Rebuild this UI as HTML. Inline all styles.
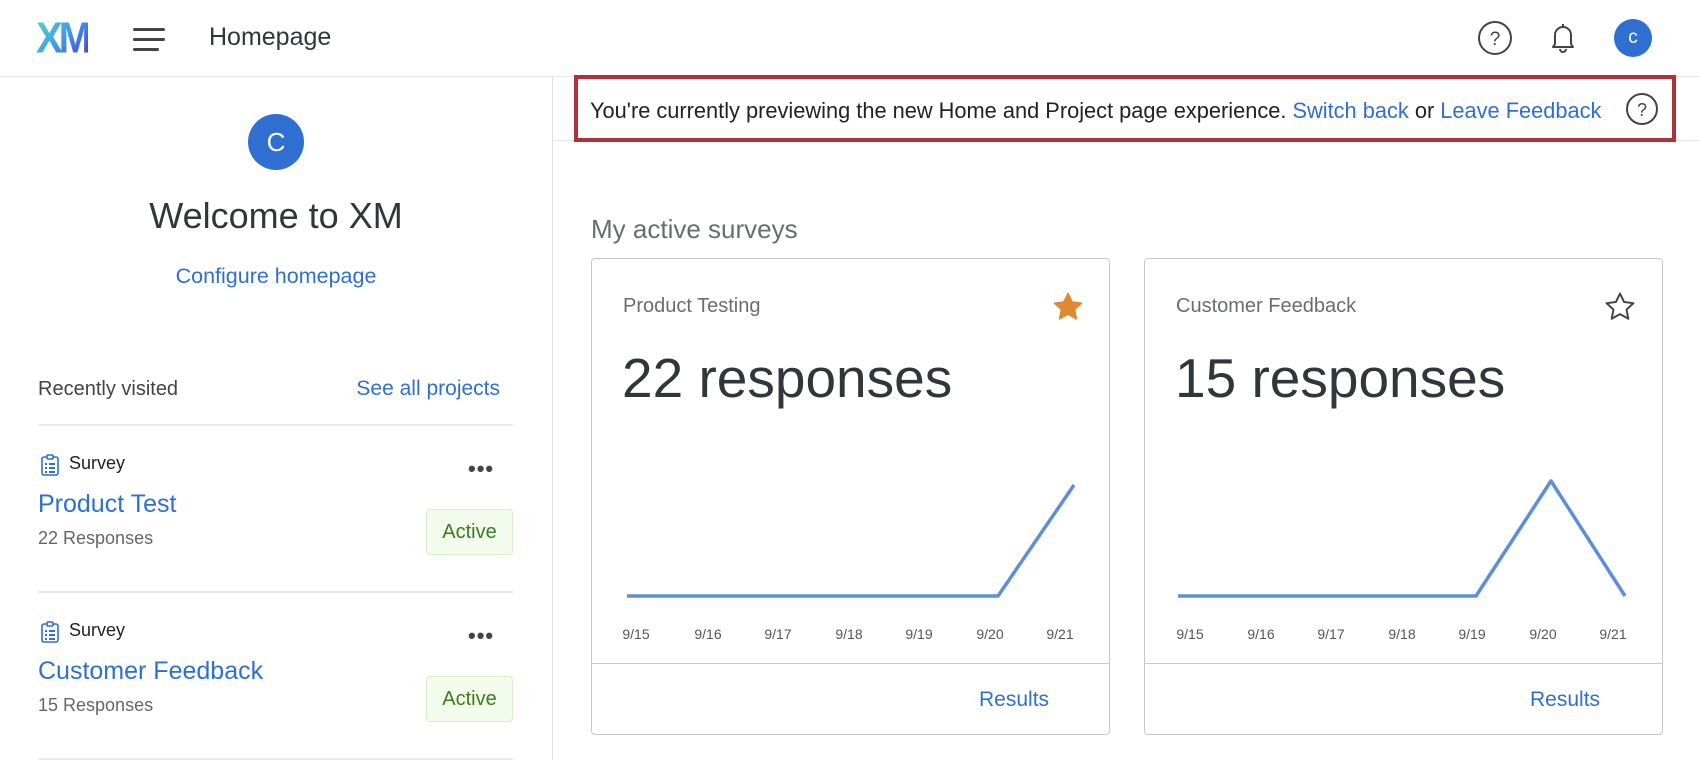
<!DOCTYPE html>
<html><head><meta charset="utf-8"><style>
*{margin:0;padding:0;box-sizing:border-box}
body{width:1700px;height:760px;overflow:hidden;background:#fff;font-family:"Liberation Sans",sans-serif;color:#32363a;position:relative}
.a{position:absolute;white-space:nowrap}
.blue{color:#2f6fd1}
.card{position:absolute;top:258px;width:519px;height:477px;border:1px solid #c6c8cc;border-radius:4px}
.lbl{position:absolute;top:626px;font-size:14px;color:#555;transform:translateX(-50%)}
.badge{position:absolute;left:426px;width:87px;height:46px;background:#f3fbec;border:1px solid #d8efc8;border-radius:4px;color:#3a7d1e;font-size:20px;text-align:center;line-height:44px}
</style></head><body>
<!-- header -->
<div class="a" style="left:36px;top:16px;font-size:40px;font-weight:bold;letter-spacing:-4px;transform:scaleY(1.1);background:linear-gradient(135deg,#5fd6b9,#3f9ee8 50%,#4a2de0);-webkit-background-clip:text;color:transparent;">XM</div>
<div class="a" style="left:133px;top:28px;width:32px;height:3px;background:#444;border-radius:2px"></div>
<div class="a" style="left:133px;top:38px;width:32px;height:3px;background:#444;border-radius:2px"></div>
<div class="a" style="left:133px;top:48px;width:26px;height:3px;background:#444;border-radius:2px"></div>
<div class="a" style="left:209px;top:23px;font-size:25px;color:#32363a">Homepage</div>
<svg class="a" style="left:1477px;top:20px" width="36" height="36" viewBox="0 0 36 36"><circle cx="18" cy="18" r="16" fill="none" stroke="#444" stroke-width="2"/><text x="18" y="25" font-size="19" text-anchor="middle" fill="#444" font-family="Liberation Sans">?</text></svg>
<svg class="a" style="left:1546px;top:20px" width="34" height="36" viewBox="0 0 34 36"><path d="M7 27 L9 24 V15 A8 8 0 0 1 25 15 V24 L27 27 Z" fill="none" stroke="#444" stroke-width="2" stroke-linejoin="round"/><path d="M14 29 A3 3 0 0 0 20 29" fill="none" stroke="#444" stroke-width="2"/><line x1="17" y1="4" x2="17" y2="7" stroke="#444" stroke-width="2"/></svg>
<div class="a" style="left:1614px;top:19px;width:38px;height:38px;border-radius:50%;background:#2f6fd1;color:#fff;font-size:19px;text-align:center;line-height:38px">c</div>
<div class="a" style="left:0;top:76px;width:1700px;height:1px;background:#e2e2e2"></div>
<!-- sidebar -->
<div class="a" style="left:552px;top:76px;width:1px;height:684px;background:#e2e2e2"></div>
<div class="a" style="left:248px;top:114px;width:56px;height:56px;border-radius:50%;background:#2f6fd1;color:#fff;font-size:26px;text-align:center;line-height:56px">C</div>
<div class="a" style="left:0;width:552px;top:195px;text-align:center;font-size:36px;color:#32363a">Welcome to XM</div>
<div class="a blue" style="left:0;width:552px;top:264px;text-align:center;font-size:21.5px">Configure homepage</div>
<div class="a" style="left:38px;top:378px;font-size:20px;color:#444">Recently visited</div>
<div class="a blue" style="right:1200px;top:377px;font-size:21px">See all projects</div>
<div class="a" style="left:38px;top:424px;width:475px;height:2px;background:#eaeaea"></div>
<!-- item 1 -->
<svg class="a" style="left:40px;top:453px" width="20" height="24" viewBox="0 0 20 24"><rect x="2" y="4" width="16" height="18" rx="2" fill="none" stroke="#2f6fd1" stroke-width="1.6"/><rect x="7" y="2" width="6" height="4" rx="1" fill="#fff" stroke="#2f6fd1" stroke-width="1.6"/><g fill="#2f6fd1"><rect x="5" y="10" width="2" height="2"/><rect x="9" y="10" width="6" height="2"/><rect x="5" y="14" width="2" height="2"/><rect x="9" y="14" width="6" height="2"/><rect x="5" y="18" width="2" height="2"/><rect x="9" y="18" width="6" height="2"/></g></svg>
<div class="a" style="left:69px;top:453px;font-size:18px;color:#222">Survey</div>
<div class="a" style="left:468px;top:456px;font-size:22px;color:#444;letter-spacing:1px;font-weight:bold">•••</div>
<div class="a blue" style="left:38px;top:490px;font-size:25px">Product Test</div>
<div class="a" style="left:38px;top:528px;font-size:18px;color:#666">22 Responses</div>
<div class="badge" style="top:509px">Active</div>
<div class="a" style="left:38px;top:591px;width:475px;height:2px;background:#eaeaea"></div>
<!-- item 2 -->
<svg class="a" style="left:40px;top:620px" width="20" height="24" viewBox="0 0 20 24"><rect x="2" y="4" width="16" height="18" rx="2" fill="none" stroke="#2f6fd1" stroke-width="1.6"/><rect x="7" y="2" width="6" height="4" rx="1" fill="#fff" stroke="#2f6fd1" stroke-width="1.6"/><g fill="#2f6fd1"><rect x="5" y="10" width="2" height="2"/><rect x="9" y="10" width="6" height="2"/><rect x="5" y="14" width="2" height="2"/><rect x="9" y="14" width="6" height="2"/><rect x="5" y="18" width="2" height="2"/><rect x="9" y="18" width="6" height="2"/></g></svg>
<div class="a" style="left:69px;top:620px;font-size:18px;color:#222">Survey</div>
<div class="a" style="left:468px;top:623px;font-size:22px;color:#444;letter-spacing:1px;font-weight:bold">•••</div>
<div class="a blue" style="left:38px;top:657px;font-size:25px">Customer Feedback</div>
<div class="a" style="left:38px;top:695px;font-size:18px;color:#666">15 Responses</div>
<div class="badge" style="top:676px">Active</div>
<div class="a" style="left:38px;top:758px;width:475px;height:2px;background:#eaeaea"></div>
<!-- banner -->
<div class="a" style="left:553px;top:140px;width:1147px;height:1px;background:#e2e2e2"></div>
<div class="a" style="left:574px;top:75px;width:1102px;height:67px;border:4px solid #b1303a;background:#fff"></div>
<div class="a" style="left:590px;top:98px;font-size:21.8px;color:#222">You're currently previewing the new Home and Project page experience. <span class="blue">Switch back</span> or <span class="blue">Leave Feedback</span></div>
<svg class="a" style="left:1625px;top:92px" width="34" height="34" viewBox="0 0 34 34"><circle cx="17" cy="17" r="15" fill="none" stroke="#444" stroke-width="2"/><text x="17" y="24" font-size="18" text-anchor="middle" fill="#444" font-family="Liberation Sans">?</text></svg>
<div class="a" style="left:591px;top:214px;font-size:26px;color:#6a6d70">My active surveys</div>
<!-- cards -->
<div class="card" style="left:591px"></div>
<div class="card" style="left:1144px"></div>
<div class="a" style="left:623px;top:295px;font-size:20px;color:#6a6d70">Product Testing</div>
<div class="a" style="left:1176px;top:295px;font-size:20px;color:#6a6d70">Customer Feedback</div>
<svg class="a" style="left:1051px;top:290px" width="34" height="34" viewBox="0 0 24 24"><path d="M12 2.5l2.9 6 6.6.8-4.9 4.5 1.3 6.5L12 17l-5.9 3.3 1.3-6.5L2.5 9.3l6.6-.8z" fill="#dd8a33" stroke="#dd8a33" stroke-width="1.2" stroke-linejoin="round"/></svg>
<svg class="a" style="left:1603px;top:290px" width="34" height="34" viewBox="0 0 24 24"><path d="M12 2.5l2.9 6 6.6.8-4.9 4.5 1.3 6.5L12 17l-5.9 3.3 1.3-6.5L2.5 9.3l6.6-.8z" fill="none" stroke="#444" stroke-width="1.4" stroke-linejoin="round"/></svg>
<div class="a" style="left:622px;top:346px;font-size:55px;color:#32363a">22 responses</div>
<div class="a" style="left:1175px;top:346px;font-size:55px;color:#32363a">15 responses</div>
<svg class="a" style="left:0;top:0" width="1700" height="760"><polyline points="627,596 998,596 1074,485" fill="none" stroke="#5b8fd8" stroke-width="3.5" stroke-linejoin="round"/><polyline points="1178,596 1476,596 1551,481 1625,596" fill="none" stroke="#5b8fd8" stroke-width="3.5" stroke-linejoin="round"/></svg>
<div class="lbl" style="left:636px">9/15</div><div class="lbl" style="left:708px">9/16</div><div class="lbl" style="left:778px">9/17</div><div class="lbl" style="left:849px">9/18</div><div class="lbl" style="left:919px">9/19</div><div class="lbl" style="left:990px">9/20</div><div class="lbl" style="left:1060px">9/21</div>
<div class="lbl" style="left:1190px">9/15</div><div class="lbl" style="left:1261px">9/16</div><div class="lbl" style="left:1331px">9/17</div><div class="lbl" style="left:1402px">9/18</div><div class="lbl" style="left:1472px">9/19</div><div class="lbl" style="left:1543px">9/20</div><div class="lbl" style="left:1613px">9/21</div>
<div class="a" style="left:592px;top:663px;width:517px;height:1px;background:#c6c8cc"></div>
<div class="a" style="left:1145px;top:663px;width:517px;height:1px;background:#c6c8cc"></div>
<div class="a blue" style="left:979px;top:688px;font-size:21px">Results</div>
<div class="a blue" style="left:1530px;top:688px;font-size:21px">Results</div>
</body></html>
